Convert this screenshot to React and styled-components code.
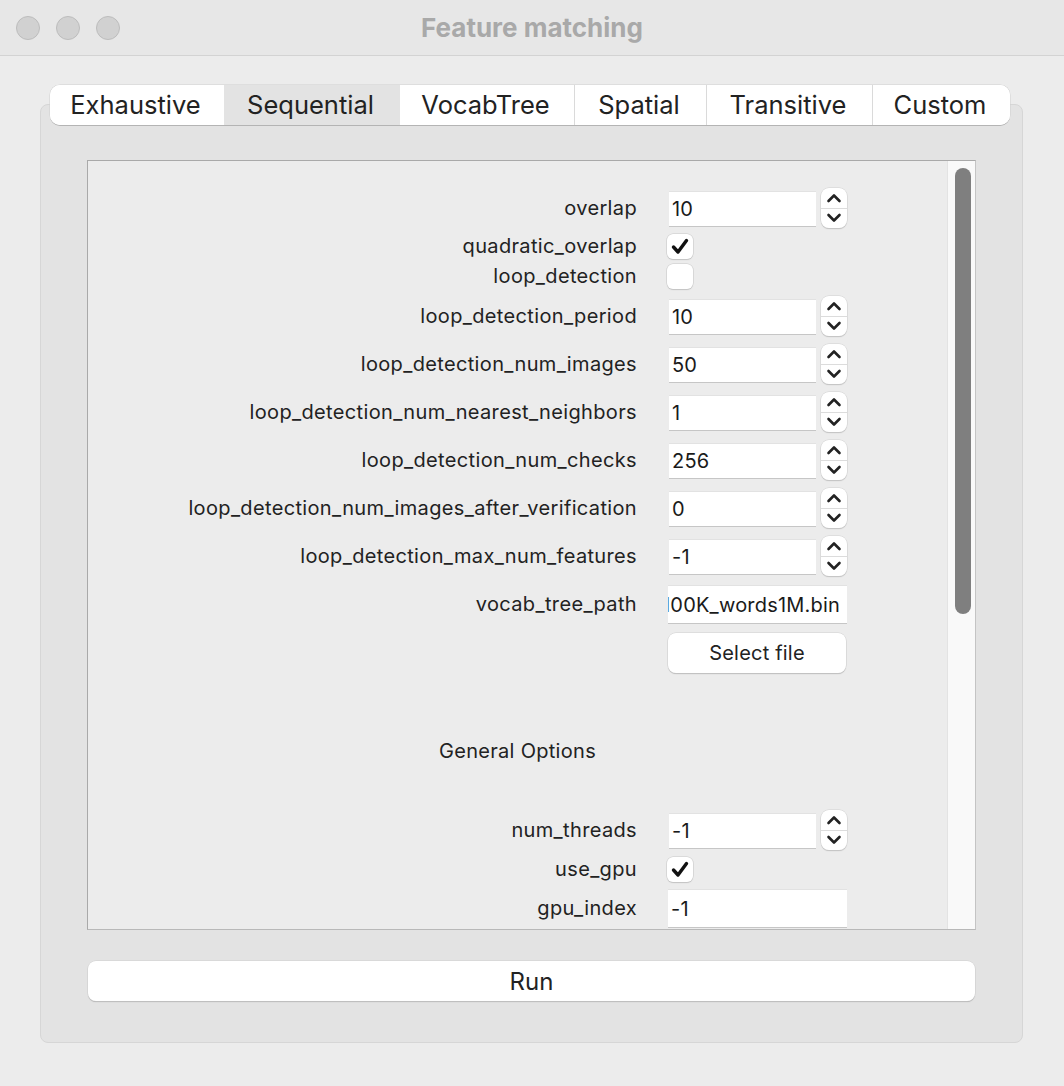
import React from 'react'
import styled, { createGlobalStyle } from 'styled-components'

const GlobalStyle = createGlobalStyle`
  html, body {
    margin: 0;
    padding: 0;
    background: #ececec;
  }
  body {
    font-family: Inter, "Liberation Sans", Arial, sans-serif;
    color: #222;
  }
`

const rows = [
  { type: 'spin', label: 'overlap', value: '10' },
  { type: 'check', label: 'quadratic_overlap', checked: true, h: 28 },
  { type: 'check', label: 'loop_detection', checked: false, h: 32 },
  { type: 'spin', label: 'loop_detection_period', value: '10' },
  { type: 'spin', label: 'loop_detection_num_images', value: '50' },
  { type: 'spin', label: 'loop_detection_num_nearest_neighbors', value: '1' },
  { type: 'spin', label: 'loop_detection_num_checks', value: '256' },
  { type: 'spin', label: 'loop_detection_num_images_after_verification', value: '0' },
  { type: 'spin', label: 'loop_detection_max_num_features', value: '-1' },
  { type: 'path', label: 'vocab_tree_path', value: '100K_words1M.bin' },
  { type: 'button', label: '', value: 'Select file', h: 50 },
  { type: 'spacer', h: 50 },
  { type: 'header', label: 'General Options', h: 46 },
  { type: 'spacer', h: 32 },
  { type: 'spin', label: 'num_threads', value: '-1' },
  { type: 'check', label: 'use_gpu', checked: true, h: 30 },
  { type: 'text', label: 'gpu_index', value: '-1' },
]

const tabs = [
  { name: 'Exhaustive', w: 174 },
  { name: 'Sequential', w: 176, active: true },
  { name: 'VocabTree', w: 174 },
  { name: 'Spatial', w: 132, sep: true },
  { name: 'Transitive', w: 166, sep: true },
  { name: 'Custom', w: 138, sep: true },
]

function Chevron({ up }) {
  return (
    <svg width="26" height="20" viewBox="0 0 26 20">
      <path
        d={up ? 'M7.5 13 L13 7.5 L18.5 13' : 'M7.5 7 L13 12.5 L18.5 7'}
        fill="none"
        stroke="#222"
        strokeWidth="2.6"
        strokeLinecap="round"
        strokeLinejoin="round"
      />
    </svg>
  )
}

function CheckMark() {
  return (
    <svg width="26" height="25" viewBox="0 0 26 25">
      <path
        d="M6.5 13 L11 18 L19.5 6.5"
        fill="none"
        stroke="#111"
        strokeWidth="3.4"
        strokeLinecap="round"
        strokeLinejoin="round"
      />
    </svg>
  )
}

function Control({ row }) {
  switch (row.type) {
    case 'spin':
      return (
        <SpinWrap>
          <Field $w={147}>{row.value}</Field>
          <Spinner>
            <Chevron up />
            <SpinDivider />
            <Chevron />
          </Spinner>
        </SpinWrap>
      )
    case 'check':
      return <CheckBox>{row.checked && <CheckMark />}</CheckBox>
    case 'path':
      return (
        <Field $w={179} $h={38} $end>
          <PathText>{row.value}</PathText>
        </Field>
      )
    case 'text':
      return <Field $w={179} $h={38}>{row.value}</Field>
    case 'button':
      return <SmallButton>{row.value}</SmallButton>
    default:
      return null
  }
}

export default function App() {
  return (
    <Window>
      <GlobalStyle />
      <TitleBar>
        <Lights>
          <Light />
          <Light />
          <Light />
        </Lights>
        <Title>Feature matching</Title>
      </TitleBar>
      <Body>
        <Panel>
          <TabBar>
            {tabs.map(t => (
              <Tab key={t.name} $w={t.w} $active={t.active} $sep={t.sep}>
                {t.name}
              </Tab>
            ))}
          </TabBar>
          <ScrollArea>
            <Content>
              {rows.map((row, i) => {
                if (row.type === 'spacer') return <Spacer key={i} $h={row.h} />
                if (row.type === 'header') return <Header key={i} $h={row.h}>{row.label}</Header>
                return (
                  <Row key={i} $h={row.h || 48}>
                    <Label>{row.label}</Label>
                    <Control row={row} />
                  </Row>
                )
              })}
            </Content>
            <ScrollTrack>
              <ScrollThumb />
            </ScrollTrack>
          </ScrollArea>
          <RunButton>Run</RunButton>
        </Panel>
      </Body>
    </Window>
  )
}

const Window = styled.div`
  width: 1064px;
  height: 1086px;
  background: #ececec;
  display: flex;
  flex-direction: column;
  overflow: hidden;
`

const TitleBar = styled.div`
  height: 56px;
  flex: none;
  background: #e7e7e7;
  border-bottom: 1px solid #d3d3d3;
  box-sizing: border-box;
  display: flex;
  align-items: center;
  justify-content: center;
  position: relative;
`

const Lights = styled.div`
  position: absolute;
  left: 16px;
  top: 16px;
  display: flex;
  gap: 16px;
`

const Light = styled.div`
  width: 24px;
  height: 24px;
  border-radius: 50%;
  background: #d1d1d1;
  border: 1px solid #bdbdbd;
  box-sizing: border-box;
`

const Title = styled.div`
  font-size: 26px;
  font-weight: 700;
  color: #a9a9a9;
`

const Body = styled.div`
  flex: 1;
  padding: 48px 41px 43px 40px;
  box-sizing: border-box;
  display: flex;
`

const Panel = styled.div`
  flex: 1;
  min-width: 0;
  background: #e3e3e3;
  border: 1px solid #d6d6d6;
  border-radius: 8px;
  padding: 0 12px 41px 9px;
  display: flex;
  flex-direction: column;
`

const TabBar = styled.div`
  display: flex;
  width: 960px;
  height: 40px;
  margin-top: -20px;
  background: #fff;
  border-radius: 10px;
  box-shadow: 0 1px 0 #b4b4b4, 0 0 0 0.5px #d0d0d0;
  overflow: hidden;
`

const Tab = styled.div`
  width: ${p => p.$w}px;
  flex: none;
  display: flex;
  align-items: center;
  justify-content: center;
  font-size: 25.5px;
  color: #222;
  background: ${p => (p.$active ? '#e3e3e3' : '#fff')};
  border-left: ${p => (p.$sep ? '1px solid #dadada' : 'none')};
  box-sizing: border-box;
  padding: 0 3px 1px 0;
`

const ScrollArea = styled.div`
  margin: 35px 34px 0 37px;
  height: 770px;
  border: 1px solid #a9a9a9;
  border-right-color: #c4c4c4;
  border-bottom-color: #b8b8b8;
  background: #ececec;
  box-sizing: border-box;
  display: flex;
  overflow: hidden;
`

const Content = styled.div`
  flex: 1;
  min-width: 0;
  padding-top: 23px;
  display: flex;
  flex-direction: column;
`

const Row = styled.div`
  height: ${p => p.$h}px;
  flex: none;
  display: grid;
  grid-template-columns: 549px auto;
  column-gap: 32px;
  align-items: center;
`

const Spacer = styled.div`
  height: ${p => p.$h}px;
  flex: none;
`

const Header = styled.div`
  height: ${p => p.$h}px;
  flex: none;
  display: flex;
  align-items: center;
  justify-content: center;
  font-size: 20px;
  letter-spacing: 0.3px;
  color: #222;
`

const Label = styled.div`
  text-align: right;
  font-size: 20px;
  letter-spacing: 0.35px;
  color: #222;
  white-space: nowrap;
`

const SpinWrap = styled.div`
  display: flex;
  align-items: center;
  gap: 5px;
`

const Field = styled.div`
  width: ${p => p.$w}px;
  height: ${p => p.$h || 35}px;
  background: #fff;
  box-sizing: border-box;
  border-top: 1px solid #e2e2e2;
  box-shadow: 0 1px 0 #c6c6c6;
  font-size: 20px;
  letter-spacing: 0.2px;
  color: #1a1a1a;
  display: flex;
  align-items: center;
  justify-content: ${p => (p.$end ? 'flex-end' : 'flex-start')};
  padding: 0 ${p => (p.$end ? '7px' : '0')} 0 3px;
  overflow: hidden;
  white-space: nowrap;
  margin-left: ${p => (p.$h ? '-1px' : '0')};
`

const PathText = styled.span`
  flex: none;
`

const Spinner = styled.div`
  width: 26px;
  height: 40px;
  background: #fff;
  border-radius: 8px;
  box-shadow: 0 0 0 0.5px #d0d0d0, 0 1px 1px #b8b8b8;
  display: flex;
  flex-direction: column;
  align-items: center;
`

const SpinDivider = styled.div`
  width: 100%;
  height: 1px;
  background: #dcdcdc;
  flex: none;
  margin: -0.5px 0;
`

const CheckBox = styled.div`
  width: 26px;
  height: 25px;
  margin-left: -2px;
  background: #fff;
  border-radius: 6px;
  box-shadow: 0 0 0 0.5px #c8c8c8, 0 1px 1px #c0c0c0;
  display: flex;
`

const SmallButton = styled.div`
  width: 178px;
  height: 40px;
  margin-left: -1px;
  background: #fff;
  border-radius: 8px;
  box-shadow: 0 0 0 0.5px #d0d0d0, 0 1px 1px #b0b0b0;
  display: flex;
  align-items: center;
  justify-content: center;
  font-size: 20px;
  letter-spacing: 0.2px;
  color: #222;
`

const ScrollTrack = styled.div`
  width: 28px;
  flex: none;
  background: #f9f9f9;
  border-left: 1px solid #e3e3e3;
  box-sizing: border-box;
  padding: 7px 0 0 7px;
`

const ScrollThumb = styled.div`
  width: 16px;
  height: 446px;
  border-radius: 8px;
  background: #7f7f7f;
`

const RunButton = styled.div`
  margin: 31px 35px 0 38px;
  height: 40px;
  background: #fff;
  border-radius: 8px;
  box-shadow: 0 0 0 0.5px #d0d0d0, 0 1px 1px #a8a8a8;
  display: flex;
  align-items: center;
  justify-content: center;
  font-size: 24px;
  color: #222;
`
